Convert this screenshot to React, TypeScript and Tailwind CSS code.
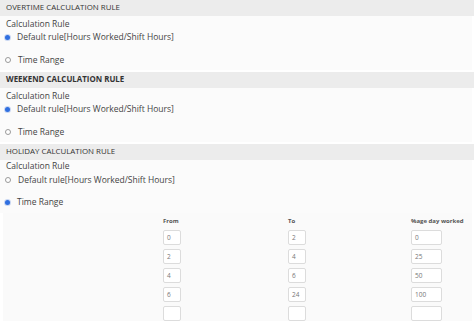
import React from 'react';

const Radio = ({ checked, label }: { checked?: boolean; label: string }) => (
  <div className="flex items-center gap-[7px] pl-[5px]">
    {checked ? (
      <span className="w-[5px] h-[5px] rounded-full bg-[#2f6fe0] ring-1 ring-[#c9d7f2]" />
    ) : (
      <span className="w-[6px] h-[6px] rounded-full border border-[#9a9a9a] bg-white" />
    )}
    <span>{label}</span>
  </div>
);

const Header = ({ title, bold }: { title: string; bold?: boolean }) => (
  <div className={`h-[16px] bg-[#ececec] pl-[6px] flex items-center text-[7.9px] text-[#333] ${bold ? 'font-bold' : ''}`}>
    {title}
  </div>
);

const Section = ({ title, bold, defaultChecked }: { title: string; bold?: boolean; defaultChecked: boolean }) => (
  <div className="mb-[2px]">
    <Header title={title} bold={bold} />
    <div className="bg-[#fbfbfb] mr-[2px] pt-[1px] pb-[3px]">
      <div className="pl-[6px] h-[14px] flex items-center">Calculation Rule</div>
      <div className="h-[13px] flex items-center"><Radio checked={defaultChecked} label="Default rule[Hours Worked/Shift Hours]" /></div>
      <div className="h-[9px]" />
      <div className="h-[14px] flex items-center"><Radio checked={!defaultChecked} label="Time Range" /></div>
    </div>
  </div>
);

const rows = [
  ['0', '2', '0'],
  ['2', '4', '25'],
  ['4', '6', '50'],
  ['6', '24', '100'],
  ['', '', ''],
];

const Box = ({ value, wide }: { value: string; wide?: boolean }) => (
  <div className={`h-[15px] ${wide ? 'w-[31px]' : 'w-[18px]'} border border-[#dcdcdc] rounded-[2px] bg-white text-[6.5px] font-normal text-[#777] pl-[3px] flex items-center`}>
    {value}
  </div>
);

export default function App() {
  return (
    <div className="w-[474px] h-[326px] overflow-hidden bg-white text-[8.5px] text-[#444]" style={{ fontFamily: '"Open Sans", sans-serif' }}>
      <Section title="OVERTIME CALCULATION RULE" defaultChecked />
      <Section title="WEEKEND CALCULATION RULE" bold defaultChecked />
      <div>
        <Header title="HOLIDAY CALCULATION RULE" />
        <div className="bg-[#fbfbfb] mr-[2px] pt-[0px] pb-[4px]">
          <div className="pl-[6px] h-[13px] flex items-center">Calculation Rule</div>
          <div className="h-[14px] flex items-center"><Radio label="Default rule[Hours Worked/Shift Hours]" /></div>
          <div className="h-[8px]" />
          <div className="h-[14px] flex items-center"><Radio checked label="Time Range" /></div>
        </div>
        <div className="ml-[3px] mr-[2px] bg-[#fafafa] pt-[3px] grid grid-cols-[160px_125px_123px_1fr] text-[6px] font-bold text-[#555] gap-y-[4px]">
          <div />
          <div className="h-[10px] flex items-center">From</div>
          <div className="h-[10px] flex items-center">To</div>
          <div className="h-[10px] flex items-center">%age day worked</div>
          {rows.map((r, i) => (
            <React.Fragment key={i}>
              <div />
              <Box value={r[0]} />
              <Box value={r[1]} />
              <Box value={r[2]} wide />
            </React.Fragment>
          ))}
        </div>
      </div>
    </div>
  );
}
